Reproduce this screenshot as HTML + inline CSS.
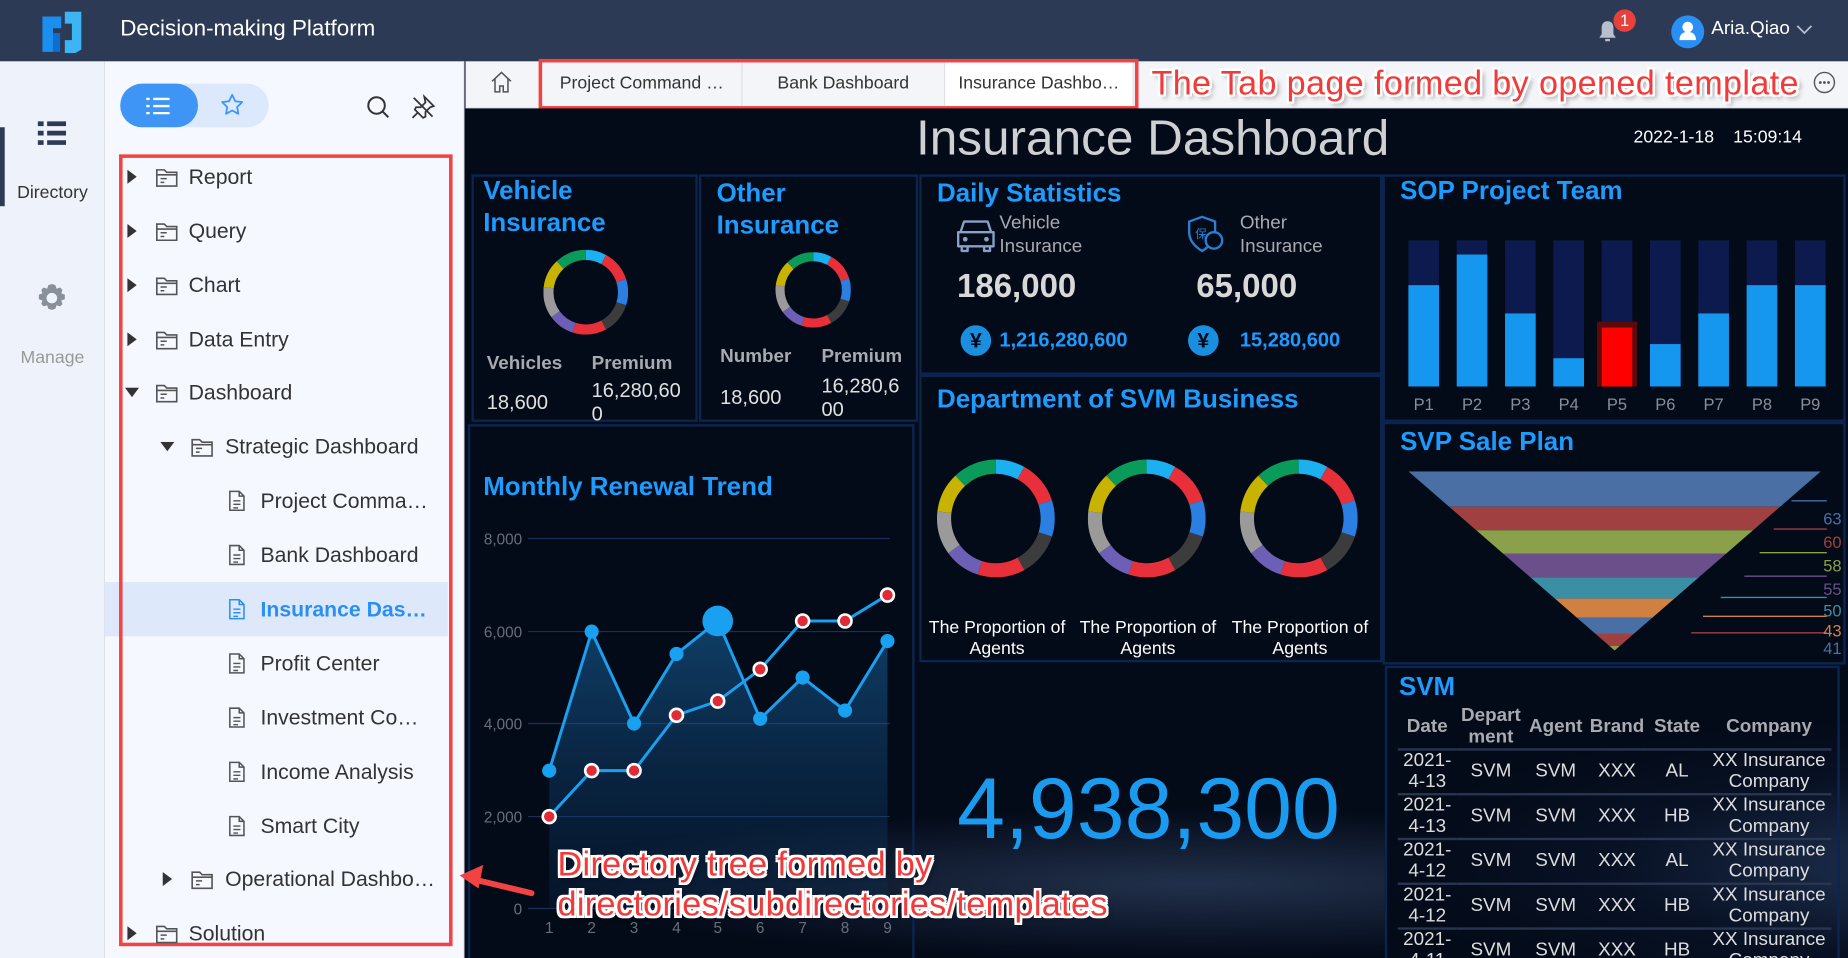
<!DOCTYPE html>
<html><head><meta charset="utf-8">
<style>
*{margin:0;padding:0;box-sizing:border-box}
html,body{width:1848px;height:958px;overflow:hidden;background:#040a18;font-family:"Liberation Sans",Arial,sans-serif}
#w{position:absolute;left:0;top:0;width:1568px;height:813px;transform:scale(1.17857,1.17835);transform-origin:0 0;overflow:hidden}
.a{position:absolute}
.top{left:0;top:0;width:1568px;height:52px;background:#2d3a55}
.side{left:0;top:52px;width:89px;height:761px;background:#eef3fb}
.tree{left:89px;top:52px;width:305px;height:761px;background:#f5f8fe;border-right:1px solid #e2e6ee}
.ti{position:absolute;height:46px;line-height:46px;font-size:18px;color:#333;white-space:nowrap}
.ti svg{position:absolute;top:15px}
.tabs{left:395px;top:52px;width:1173px;height:40px;background:#f3f5f8;border-bottom:1px solid #e0e3e8}
.tab{position:absolute;top:52px;height:38px;line-height:38px;font-size:15px;color:#333;text-align:center;border-right:1px solid #dde1e8}
.dash{left:395px;top:92px;width:1173px;height:721px;background:#030a18}
.pn{position:absolute;border:2px solid #0b2550}
.tt{position:absolute;color:#1e9bff;font-weight:bold;font-size:22px;line-height:27px}
.g{color:#a8aab0}
.wt{color:#e0e0e0}
.ann{position:absolute;color:#f23a3a;font-size:29px;letter-spacing:0.3px;white-space:nowrap;text-shadow:2px 0 #fff,-2px 0 #fff,0 2px #fff,0 -2px #fff,2px 2px #fff,-2px -2px #fff,2px -2px #fff,-2px 2px #fff,3px 3px 4px rgba(0,0,0,.4)}
table{border-collapse:collapse}
</style></head><body><div id="w">
<svg width="0" height="0" style="position:absolute"><defs>
<symbol id="dn" viewBox="0 0 100 100"><g transform="rotate(-90 50 50)" fill="none" stroke-width="12">
<circle cx="50" cy="50" r="44" pathLength="100" stroke="#1bb0f0" stroke-dasharray="8 92"/>
<circle cx="50" cy="50" r="44" pathLength="100" stroke="#e8303a" stroke-dasharray="12 88" stroke-dashoffset="-8"/>
<circle cx="50" cy="50" r="44" pathLength="100" stroke="#2a7fe0" stroke-dasharray="10 90" stroke-dashoffset="-20"/>
<circle cx="50" cy="50" r="44" pathLength="100" stroke="#3c3c3c" stroke-dasharray="12 88" stroke-dashoffset="-30"/>
<circle cx="50" cy="50" r="44" pathLength="100" stroke="#e8303a" stroke-dasharray="13 87" stroke-dashoffset="-42"/>
<circle cx="50" cy="50" r="44" pathLength="100" stroke="#6c5fb5" stroke-dasharray="10 90" stroke-dashoffset="-55"/>
<circle cx="50" cy="50" r="44" pathLength="100" stroke="#9a9a9a" stroke-dasharray="12 88" stroke-dashoffset="-65"/>
<circle cx="50" cy="50" r="44" pathLength="100" stroke="#c8b400" stroke-dasharray="11 89" stroke-dashoffset="-77"/>
<circle cx="50" cy="50" r="44" pathLength="100" stroke="#0a9a5a" stroke-dasharray="12 88" stroke-dashoffset="-88"/>
</g></symbol>
<symbol id="fd" viewBox="0 0 18 16"><path d="M1 2h6l2 2h8v11H1z M1 6h16" fill="none" stroke="#555" stroke-width="1.3"/><path d="M4 9h5M4 12h3" stroke="#555" stroke-width="1.2"/></symbol>
<symbol id="fl" viewBox="0 0 16 18"><path d="M2 1h8l4 4v12H2z M10 1v4h4" fill="none" stroke="#555" stroke-width="1.3"/><path d="M5 9h6M5 12h6M5 15h4" stroke="#555" stroke-width="1.2"/></symbol>
</defs></svg>

<div class="a top"></div>
<svg class="a" style="left:33px;top:8px" width="38" height="38" viewBox="0 0 38 38"><path d="M3 6h16v10H12v20H3z" fill="#1a8ff0"/><path d="M22 2h14v32l-5 3H22V26h6V12h-6z" fill="#3db5f5"/><path d="M12 20h6v16h-6z" fill="#0f6fd0"/></svg>
<div class="a" style="left:102px;top:14px;font-size:19px;color:#fff">Decision-making Platform</div>
<svg class="a" style="left:1355px;top:16px" width="18" height="20" viewBox="0 0 18 20"><path d="M9 2c-4 0-5 3-5 6v5l-2 3h14l-2-3V8c0-3-1-6-5-6z M7 17h4v2H7z" fill="#b8bfcc"/></svg>
<div class="a" style="left:1369px;top:8px;width:19px;height:19px;border-radius:50%;background:#e8403a;color:#fff;font-size:14px;text-align:center;line-height:19px">1</div>
<div class="a" style="left:1418px;top:13px;width:28px;height:28px;border-radius:50%;background:#2a8ff2"></div>
<svg class="a" style="left:1418px;top:13px" width="28" height="28" viewBox="0 0 28 28"><circle cx="14" cy="10" r="4.5" fill="#fff"/><path d="M7 21c0-5 3-7 7-7s7 2 7 7z" fill="#fff"/></svg>
<div class="a" style="left:1452px;top:16px;font-size:16px;color:#fff">Aria.Qiao</div>
<svg class="a" style="left:1524px;top:20px" width="14" height="10" viewBox="0 0 14 10"><path d="M1 2l6 6 6-6" fill="none" stroke="#b8bfcc" stroke-width="1.5"/></svg>

<div class="a side"></div>
<div class="a" style="left:0;top:108px;width:4px;height:67px;background:#2d3a55"></div>
<svg class="a" style="left:32px;top:102px" width="24" height="22" viewBox="0 0 24 22"><path d="M0 1h5v4H0zM8 1h16v4H8zM0 9h5v4H0zM8 9h16v4H8zM0 17h5v4H0zM8 17h16v4H8z" fill="#2d3a55"/></svg>
<div class="a" style="left:0;top:155px;width:89px;text-align:center;font-size:15px;color:#333">Directory</div>
<svg class="a" style="left:30px;top:239px" width="28" height="28" viewBox="0 0 28 28"><path d="M14 2l3 1 1 3 3-1 2 2-1 3 3 1v4l-3 1 1 3-2 2-3-1-1 3-3 1-3-1-1-3-3 1-2-2 1-3-3-1v-4l3-1-1-3 2-2 3 1 1-3z" fill="#8a9099"/><circle cx="14" cy="14" r="4.5" fill="#eef3fb"/></svg>
<div class="a" style="left:0;top:295px;width:89px;text-align:center;font-size:15px;color:#999">Manage</div>

<div class="a tree"></div>
<div class="a" style="left:102px;top:71px;width:126px;height:37px;border-radius:19px;background:#dce8fb"></div>
<div class="a" style="left:102px;top:71px;width:66px;height:37px;border-radius:19px;background:#3e95f5"></div>
<svg class="a" style="left:124px;top:82px" width="20" height="16" viewBox="0 0 20 16"><path d="M0 1h3v2H0zM6 1h14v2H6zM0 7h3v2H0zM6 7h14v2H6zM0 13h3v2H0zM6 13h14v2H6z" fill="#fff"/></svg>
<svg class="a" style="left:187px;top:79px" width="20" height="20" viewBox="0 0 20 20"><path d="M10 1.5l2.6 5.4 5.9.8-4.3 4.1 1 5.8L10 14.8l-5.2 2.8 1-5.8L1.5 7.7l5.9-.8z" fill="none" stroke="#3e95f5" stroke-width="1.5" stroke-linejoin="round"/></svg>
<svg class="a" style="left:310px;top:80px" width="22" height="22" viewBox="0 0 22 22"><circle cx="9.5" cy="9.5" r="7" fill="none" stroke="#333" stroke-width="1.7"/><path d="M14.5 14.5l5 5" stroke="#333" stroke-width="1.7"/></svg>
<svg class="a" style="left:348px;top:80px" width="22" height="22" viewBox="0 0 22 22"><path d="M12 2l8 8-3 1-4 4 0 4-2 1-7-7 1-2 4 0 4-4z M7 15l-5 5 M3 3l16 16" fill="none" stroke="#333" stroke-width="1.5"/></svg>

<div class="a" style="left:89px;top:494px;width:291px;height:46px;background:#dde9fb"></div>
<div class="a" style="left:101px;top:131px;width:283px;height:672px;border:3px solid #f24343"></div>

<div class="ti" style="left:108px;top:127px"><svg width="8" height="12" style="left:0;top:17px" viewBox="0 0 8 12"><path d="M0 0l8 6-8 6z" fill="#333"/></svg><svg width="19" height="17" style="left:24px" viewBox="0 0 18 16"><use href="#fd"/></svg><span style="margin-left:52px">Report</span></div>
<div class="ti" style="left:108px;top:173px"><svg width="8" height="12" style="left:0;top:17px" viewBox="0 0 8 12"><path d="M0 0l8 6-8 6z" fill="#333"/></svg><svg width="19" height="17" style="left:24px" viewBox="0 0 18 16"><use href="#fd"/></svg><span style="margin-left:52px">Query</span></div>
<div class="ti" style="left:108px;top:219px"><svg width="8" height="12" style="left:0;top:17px" viewBox="0 0 8 12"><path d="M0 0l8 6-8 6z" fill="#333"/></svg><svg width="19" height="17" style="left:24px" viewBox="0 0 18 16"><use href="#fd"/></svg><span style="margin-left:52px">Chart</span></div>
<div class="ti" style="left:108px;top:265px"><svg width="8" height="12" style="left:0;top:17px" viewBox="0 0 8 12"><path d="M0 0l8 6-8 6z" fill="#333"/></svg><svg width="19" height="17" style="left:24px" viewBox="0 0 18 16"><use href="#fd"/></svg><span style="margin-left:52px">Data Entry</span></div>
<div class="ti" style="left:106px;top:310px"><svg width="12" height="8" style="left:0;top:19px" viewBox="0 0 12 8"><path d="M0 0h12L6 8z" fill="#333"/></svg><svg width="19" height="17" style="left:26px" viewBox="0 0 18 16"><use href="#fd"/></svg><span style="margin-left:54px">Dashboard</span></div>
<div class="ti" style="left:136px;top:356px"><svg width="12" height="8" style="left:0;top:19px" viewBox="0 0 12 8"><path d="M0 0h12L6 8z" fill="#333"/></svg><svg width="19" height="17" style="left:26px" viewBox="0 0 18 16"><use href="#fd"/></svg><span style="margin-left:55px">Strategic Dashboard</span></div>
<div class="ti" style="left:193px;top:402px"><svg width="16" height="18" style="left:0;top:14px" viewBox="0 0 16 18"><use href="#fl"/></svg><span style="margin-left:28px">Project Comma…</span></div>
<div class="ti" style="left:193px;top:448px"><svg width="16" height="18" style="left:0;top:14px" viewBox="0 0 16 18"><use href="#fl"/></svg><span style="margin-left:28px">Bank Dashboard</span></div>
<div class="ti" style="left:193px;top:494px;color:#2a8ff2;font-weight:bold"><svg width="16" height="18" style="left:0;top:14px" viewBox="0 0 16 18"><path d="M2 1h8l4 4v12H2z M10 1v4h4" fill="none" stroke="#2a8ff2" stroke-width="1.3"/><path d="M5 9h6M5 12h6M5 15h4" stroke="#2a8ff2" stroke-width="1.2"/></svg><span style="margin-left:28px">Insurance Das…</span></div>
<div class="ti" style="left:193px;top:540px"><svg width="16" height="18" style="left:0;top:14px" viewBox="0 0 16 18"><use href="#fl"/></svg><span style="margin-left:28px">Profit Center</span></div>
<div class="ti" style="left:193px;top:586px"><svg width="16" height="18" style="left:0;top:14px" viewBox="0 0 16 18"><use href="#fl"/></svg><span style="margin-left:28px">Investment Co…</span></div>
<div class="ti" style="left:193px;top:632px"><svg width="16" height="18" style="left:0;top:14px" viewBox="0 0 16 18"><use href="#fl"/></svg><span style="margin-left:28px">Income Analysis</span></div>
<div class="ti" style="left:193px;top:678px"><svg width="16" height="18" style="left:0;top:14px" viewBox="0 0 16 18"><use href="#fl"/></svg><span style="margin-left:28px">Smart City</span></div>
<div class="ti" style="left:138px;top:723px"><svg width="8" height="12" style="left:0;top:17px" viewBox="0 0 8 12"><path d="M0 0l8 6-8 6z" fill="#333"/></svg><svg width="19" height="17" style="left:24px" viewBox="0 0 18 16"><use href="#fd"/></svg><span style="margin-left:53px">Operational Dashbo…</span></div>
<div class="ti" style="left:108px;top:769px"><svg width="8" height="12" style="left:0;top:17px" viewBox="0 0 8 12"><path d="M0 0l8 6-8 6z" fill="#333"/></svg><svg width="19" height="17" style="left:24px" viewBox="0 0 18 16"><use href="#fd"/></svg><span style="margin-left:52px">Solution</span></div>

<div class="a tabs"></div>
<svg class="a" style="left:416px;top:60px" width="19" height="20" viewBox="0 0 19 20"><path d="M1.5 9L9.5 1.5 17.5 9M4 7v11h4v-5h3v5h4V7" fill="none" stroke="#555" stroke-width="1.3"/></svg>
<div class="tab" style="left:460px;width:170px">Project Command …</div>
<div class="tab" style="left:630px;width:172px">Bank Dashboard</div>
<div class="tab" style="left:802px;width:160px;background:#fff">Insurance Dashbo…</div>
<div class="a" style="left:457px;top:50px;width:509px;height:43px;border:3px solid #f24343"></div>
<div class="ann" style="left:977px;top:55px">The Tab page formed by opened template</div>
<svg class="a" style="left:1538px;top:60px" width="20" height="20" viewBox="0 0 20 20"><circle cx="10" cy="10" r="8.5" fill="none" stroke="#555" stroke-width="1.2"/><circle cx="6.5" cy="10" r="1.2" fill="#555"/><circle cx="10" cy="10" r="1.2" fill="#555"/><circle cx="13.5" cy="10" r="1.2" fill="#555"/></svg>

<div class="a dash"></div>
<div class="a" style="left:780px;top:565px;width:790px;height:250px;background:radial-gradient(ellipse 520px 130px at 900px 170px,rgba(60,90,140,.55),rgba(20,35,65,.3) 60%,rgba(3,10,24,0) 100%)"></div>
<div class="a" style="left:395px;top:620px;width:780px;height:200px;background:radial-gradient(ellipse 700px 80px at 620px 130px,rgba(90,120,170,.35),rgba(3,10,24,0) 80%)"></div>

<div class="a wt" style="left:740px;top:92px;width:476px;text-align:center;font-size:42px;color:#cfd0d4;line-height:50px">Insurance Dashboard</div>
<div class="a" style="left:1386px;top:108px;font-size:15px;color:#fff;word-spacing:12px">2022-1-18 15:09:14</div>

<div class="pn" style="left:400px;top:148px;width:192px;height:210px"></div>
<div class="pn" style="left:593px;top:148px;width:186px;height:210px"></div>
<div class="pn" style="left:780px;top:148px;width:393px;height:170px"></div>
<div class="pn" style="left:1173px;top:148px;width:393px;height:210px"></div>
<div class="pn" style="left:780px;top:318px;width:393px;height:244px"></div>
<div class="pn" style="left:1173px;top:358px;width:393px;height:206px"></div>
<div class="pn" style="left:397px;top:360px;width:379px;height:455px"></div>
<div class="pn" style="left:1175px;top:565px;width:386px;height:250px"></div>

<div class="tt" style="left:410px;top:148px">Vehicle<br>Insurance</div>
<svg class="a" style="left:461px;top:212px" width="72" height="72"><use href="#dn" width="72" height="72"/></svg>
<div class="a g" style="left:413px;top:300px;font-size:16px;font-weight:bold">Vehicles</div>
<div class="a g" style="left:502px;top:300px;font-size:16px;font-weight:bold">Premium</div>
<div class="a wt" style="left:413px;top:332px;font-size:17px">18,600</div>
<div class="a wt" style="left:502px;top:322px;font-size:17px;line-height:20px">16,280,60<br>0</div>

<div class="tt" style="left:608px;top:150px">Other<br>Insurance</div>
<svg class="a" style="left:658px;top:214px" width="64" height="64"><use href="#dn" width="64" height="64"/></svg>
<div class="a g" style="left:611px;top:294px;font-size:16px;font-weight:bold">Number</div>
<div class="a g" style="left:697px;top:294px;font-size:16px;font-weight:bold">Premium</div>
<div class="a wt" style="left:611px;top:328px;font-size:17px">18,600</div>
<div class="a wt" style="left:697px;top:318px;font-size:17px;line-height:20px">16,280,6<br>00</div>

<div class="tt" style="left:795px;top:150px">Daily Statistics</div>
<svg class="a" style="left:810px;top:185px" width="36" height="30" viewBox="0 0 36 30"><path d="M8 3h20l3 9H5z M3 12h30v12H3z M6 24v4h5v-4 M25 24v4h5v-4" fill="none" stroke="#8aa0c8" stroke-width="2" stroke-linejoin="round"/><circle cx="9" cy="18" r="2" fill="#8aa0c8"/><circle cx="27" cy="18" r="2" fill="#8aa0c8"/></svg>
<div class="a g" style="left:848px;top:180px;font-size:16px;line-height:20px">Vehicle<br>Insurance</div>
<div class="a" style="left:812px;top:227px;font-size:28px;font-weight:bold;color:#d8d8d8">186,000</div>
<div class="a" style="left:815px;top:276px;width:26px;height:26px;border-radius:50%;background:#1a8fe0;color:#020a18;font-weight:bold;font-size:18px;text-align:center;line-height:26px">¥</div>
<div class="a" style="left:848px;top:279px;font-size:17px;font-weight:bold;color:#1e9bff">1,216,280,600</div>
<svg class="a" style="left:1006px;top:182px" width="34" height="34" viewBox="0 0 34 34"><path d="M14 2l11 4v9c0 8-6 13-11 16C9 28 3 23 3 15V6z" fill="none" stroke="#2a7fd0" stroke-width="2"/><circle cx="24" cy="22" r="7" fill="#030a18" stroke="#2a7fd0" stroke-width="2"/><text x="8" y="20" font-size="10" fill="#2a7fd0" font-family="Noto Sans CJK SC,sans-serif">保</text></svg>
<div class="a g" style="left:1052px;top:180px;font-size:16px;line-height:20px">Other<br>Insurance</div>
<div class="a" style="left:1015px;top:227px;font-size:28px;font-weight:bold;color:#d8d8d8">65,000</div>
<div class="a" style="left:1008px;top:276px;width:26px;height:26px;border-radius:50%;background:#1a8fe0;color:#020a18;font-weight:bold;font-size:18px;text-align:center;line-height:26px">¥</div>
<div class="a" style="left:1052px;top:279px;font-size:17px;font-weight:bold;color:#1e9bff">15,280,600</div>

<div class="tt" style="left:1188px;top:148px">SOP Project Team</div>
<svg class="a" style="left:1180px;top:200px" width="380" height="155">
<g fill="#0d1a4e"><rect x="15" y="4" width="26" height="124"/><rect x="56" y="4" width="26" height="124"/><rect x="97" y="4" width="26" height="124"/><rect x="138" y="4" width="26" height="124"/><rect x="179" y="4" width="26" height="124"/><rect x="220" y="4" width="26" height="124"/><rect x="261" y="4" width="26" height="124"/><rect x="302" y="4" width="26" height="124"/><rect x="343" y="4" width="26" height="124"/></g>
<g fill="#1597f0"><rect x="15" y="42" width="26" height="86"/><rect x="56" y="16" width="26" height="112"/><rect x="97" y="66" width="26" height="62"/><rect x="138" y="104" width="26" height="24"/><rect x="220" y="92" width="26" height="36"/><rect x="261" y="66" width="26" height="62"/><rect x="302" y="42" width="26" height="86"/><rect x="343" y="42" width="26" height="86"/></g>
<rect x="175" y="73" width="34" height="55" fill="#5a0a0a"/><rect x="179" y="78" width="26" height="50" fill="#f00"/>
<g fill="#8a8e96" font-size="14" text-anchor="middle" font-family="Liberation Sans,sans-serif"><text x="28" y="148">P1</text><text x="69" y="148">P2</text><text x="110" y="148">P3</text><text x="151" y="148">P4</text><text x="192" y="148">P5</text><text x="233" y="148">P6</text><text x="274" y="148">P7</text><text x="315" y="148">P8</text><text x="356" y="148">P9</text></g>
</svg>

<div class="tt" style="left:795px;top:325px">Department of SVM Business</div>
<svg class="a" style="left:795px;top:390px" width="100" height="100"><use href="#dn" width="100" height="100"/></svg>
<svg class="a" style="left:923px;top:390px" width="100" height="100"><use href="#dn" width="100" height="100"/></svg>
<svg class="a" style="left:1052px;top:390px" width="100" height="100"><use href="#dn" width="100" height="100"/></svg>
<div class="a" style="left:785px;top:524px;width:122px;text-align:center;color:#fff;font-size:15px;line-height:18px">The Proportion of Agents</div>
<div class="a" style="left:913px;top:524px;width:122px;text-align:center;color:#fff;font-size:15px;line-height:18px">The Proportion of Agents</div>
<div class="a" style="left:1042px;top:524px;width:122px;text-align:center;color:#fff;font-size:15px;line-height:18px">The Proportion of Agents</div>

<div class="tt" style="left:1188px;top:361px">SVP Sale Plan</div>
<svg class="a" style="left:1175px;top:395px" width="390" height="165">
<defs><clipPath id="tri"><path d="M20 5H370L195 157z"/></clipPath></defs>
<g clip-path="url(#tri)"><rect y="0" width="390" height="35" fill="#4a6fa5"/><rect y="35" width="390" height="20" fill="#a04040"/><rect y="55" width="390" height="20" fill="#8aa04a"/><rect y="75" width="390" height="20" fill="#6a4f8a"/><rect y="95" width="390" height="18" fill="#3a8fa5"/><rect y="113" width="390" height="16" fill="#d08040"/><rect y="129" width="390" height="14" fill="#4a6fa5"/><rect y="143" width="390" height="10" fill="#a04040"/><rect y="153" width="390" height="6" fill="#8aa04a"/></g>
<g stroke-width="1.2"><path d="M345 30H375" stroke="#4a6fa5"/><path d="M330 54H375" stroke="#a04040"/><path d="M318 74H375" stroke="#8aa04a"/><path d="M305 94H375" stroke="#6a4f8a"/><path d="M285 112H375" stroke="#3a8fa5"/><path d="M270 128H375" stroke="#d08040"/><path d="M260 142H375" stroke="#a04040"/></g>
<g font-size="14" font-family="Liberation Sans,sans-serif"><text x="372" y="50" fill="#4a6fa5">63</text><text x="372" y="70" fill="#a04040">60</text><text x="372" y="90" fill="#8aa04a">58</text><text x="372" y="110" fill="#6a4f8a">55</text><text x="372" y="128" fill="#3a8fa5">50</text><text x="372" y="145" fill="#d08040">43</text><text x="372" y="160" fill="#4a6fa5">41</text></g>
</svg>

<div class="tt" style="left:410px;top:399px">Monthly Renewal Trend</div>
<svg class="a" style="left:400px;top:440px" width="375" height="365" font-family="Liberation Sans,sans-serif">
<defs><linearGradient id="ar" x1="0" y1="0" x2="0" y2="1"><stop offset="0" stop-color="#1a6aa8" stop-opacity=".55"/><stop offset="1" stop-color="#0a2a50" stop-opacity=".3"/></linearGradient></defs>
<g stroke="#1d2d5a" stroke-width="1"><path d="M48 17H355M48 96H355M48 174H355M48 253H355M48 331H355"/></g>
<g fill="#6a6e78" font-size="13" text-anchor="end"><text x="43" y="22">8,000</text><text x="43" y="101">6,000</text><text x="43" y="179">4,000</text><text x="43" y="258">2,000</text><text x="43" y="336">0</text></g>
<g fill="#6a6e78" font-size="13" text-anchor="middle"><text x="66" y="352">1</text><text x="102" y="352">2</text><text x="138" y="352">3</text><text x="174" y="352">4</text><text x="209" y="352">5</text><text x="245" y="352">6</text><text x="281" y="352">7</text><text x="317" y="352">8</text><text x="353" y="352">9</text></g>
<path d="M66 214L102 96 138 174 174 115 209 87 245 170 281 135 317 163 353 104V331H66z" fill="url(#ar)"/>
<path d="M66 214L102 96 138 174 174 115 209 87 245 170 281 135 317 163 353 104" fill="none" stroke="#1aa0f0" stroke-width="2.5"/>
<g fill="#1aa0f0"><circle cx="66" cy="214" r="6"/><circle cx="102" cy="96" r="6"/><circle cx="138" cy="174" r="6"/><circle cx="174" cy="115" r="6"/><circle cx="209" cy="87" r="13"/><circle cx="245" cy="170" r="6"/><circle cx="281" cy="135" r="6"/><circle cx="317" cy="163" r="6"/><circle cx="353" cy="104" r="6"/></g>
<path d="M66 253L102 214 138 214 174 167 209 155 245 128 281 87 317 87 353 65" fill="none" stroke="#1aa0f0" stroke-width="2.5"/>
<g fill="#e02a36" stroke="#fff" stroke-width="2.2"><circle cx="66" cy="253" r="5.5"/><circle cx="102" cy="214" r="5.5"/><circle cx="138" cy="214" r="5.5"/><circle cx="174" cy="167" r="5.5"/><circle cx="209" cy="155" r="5.5"/><circle cx="245" cy="128" r="5.5"/><circle cx="281" cy="87" r="5.5"/><circle cx="317" cy="87" r="5.5"/><circle cx="353" cy="65" r="5.5"/></g>
</svg>

<div class="a" style="left:778px;top:642px;width:393px;text-align:center;font-size:73px;color:#1a9bf0;line-height:90px">4,938,300</div>

<div class="tt" style="left:1187px;top:569px">SVM</div>
<table class="a" style="left:1186px;top:598px;width:368px;color:#ddd;font-size:16px;text-align:center;line-height:18px">
<tr style="color:#a8aab0;font-weight:bold;height:38px"><td style="width:50px">Date</td><td style="width:58px">Depart<br>ment</td><td style="width:52px">Agent</td><td style="width:52px">Brand</td><td style="width:50px">State</td><td>Company</td></tr>
<tr style="height:37px;border-top:2px solid #2a3550"><td>2021-<br>4-13</td><td>SVM</td><td>SVM</td><td>XXX</td><td>AL</td><td>XX Insurance<br>Company</td></tr>
<tr style="height:37px;border-top:2px solid #2a3550"><td>2021-<br>4-13</td><td>SVM</td><td>SVM</td><td>XXX</td><td>HB</td><td>XX Insurance<br>Company</td></tr>
<tr style="height:37px;border-top:2px solid #2a3550"><td>2021-<br>4-12</td><td>SVM</td><td>SVM</td><td>XXX</td><td>AL</td><td>XX Insurance<br>Company</td></tr>
<tr style="height:37px;border-top:2px solid #2a3550"><td>2021-<br>4-12</td><td>SVM</td><td>SVM</td><td>XXX</td><td>HB</td><td>XX Insurance<br>Company</td></tr>
<tr style="height:37px;border-top:2px solid #2a3550"><td>2021-<br>4-11</td><td>SVM</td><td>SVM</td><td>XXX</td><td>HB</td><td>XX Insurance<br>Company</td></tr>
</table>

<svg class="a" style="left:385px;top:730px" width="70" height="35" viewBox="0 0 70 35"><path d="M66 28L20 17" stroke="#f24343" stroke-width="5" stroke-linecap="round"/><path d="M5 13l20-9-4 20z" fill="#f24343"/></svg>
<div class="ann" style="left:473px;top:717px;line-height:34px">Directory tree formed by<br>directories/subdirectories/templates</div>
</div></body></html>
